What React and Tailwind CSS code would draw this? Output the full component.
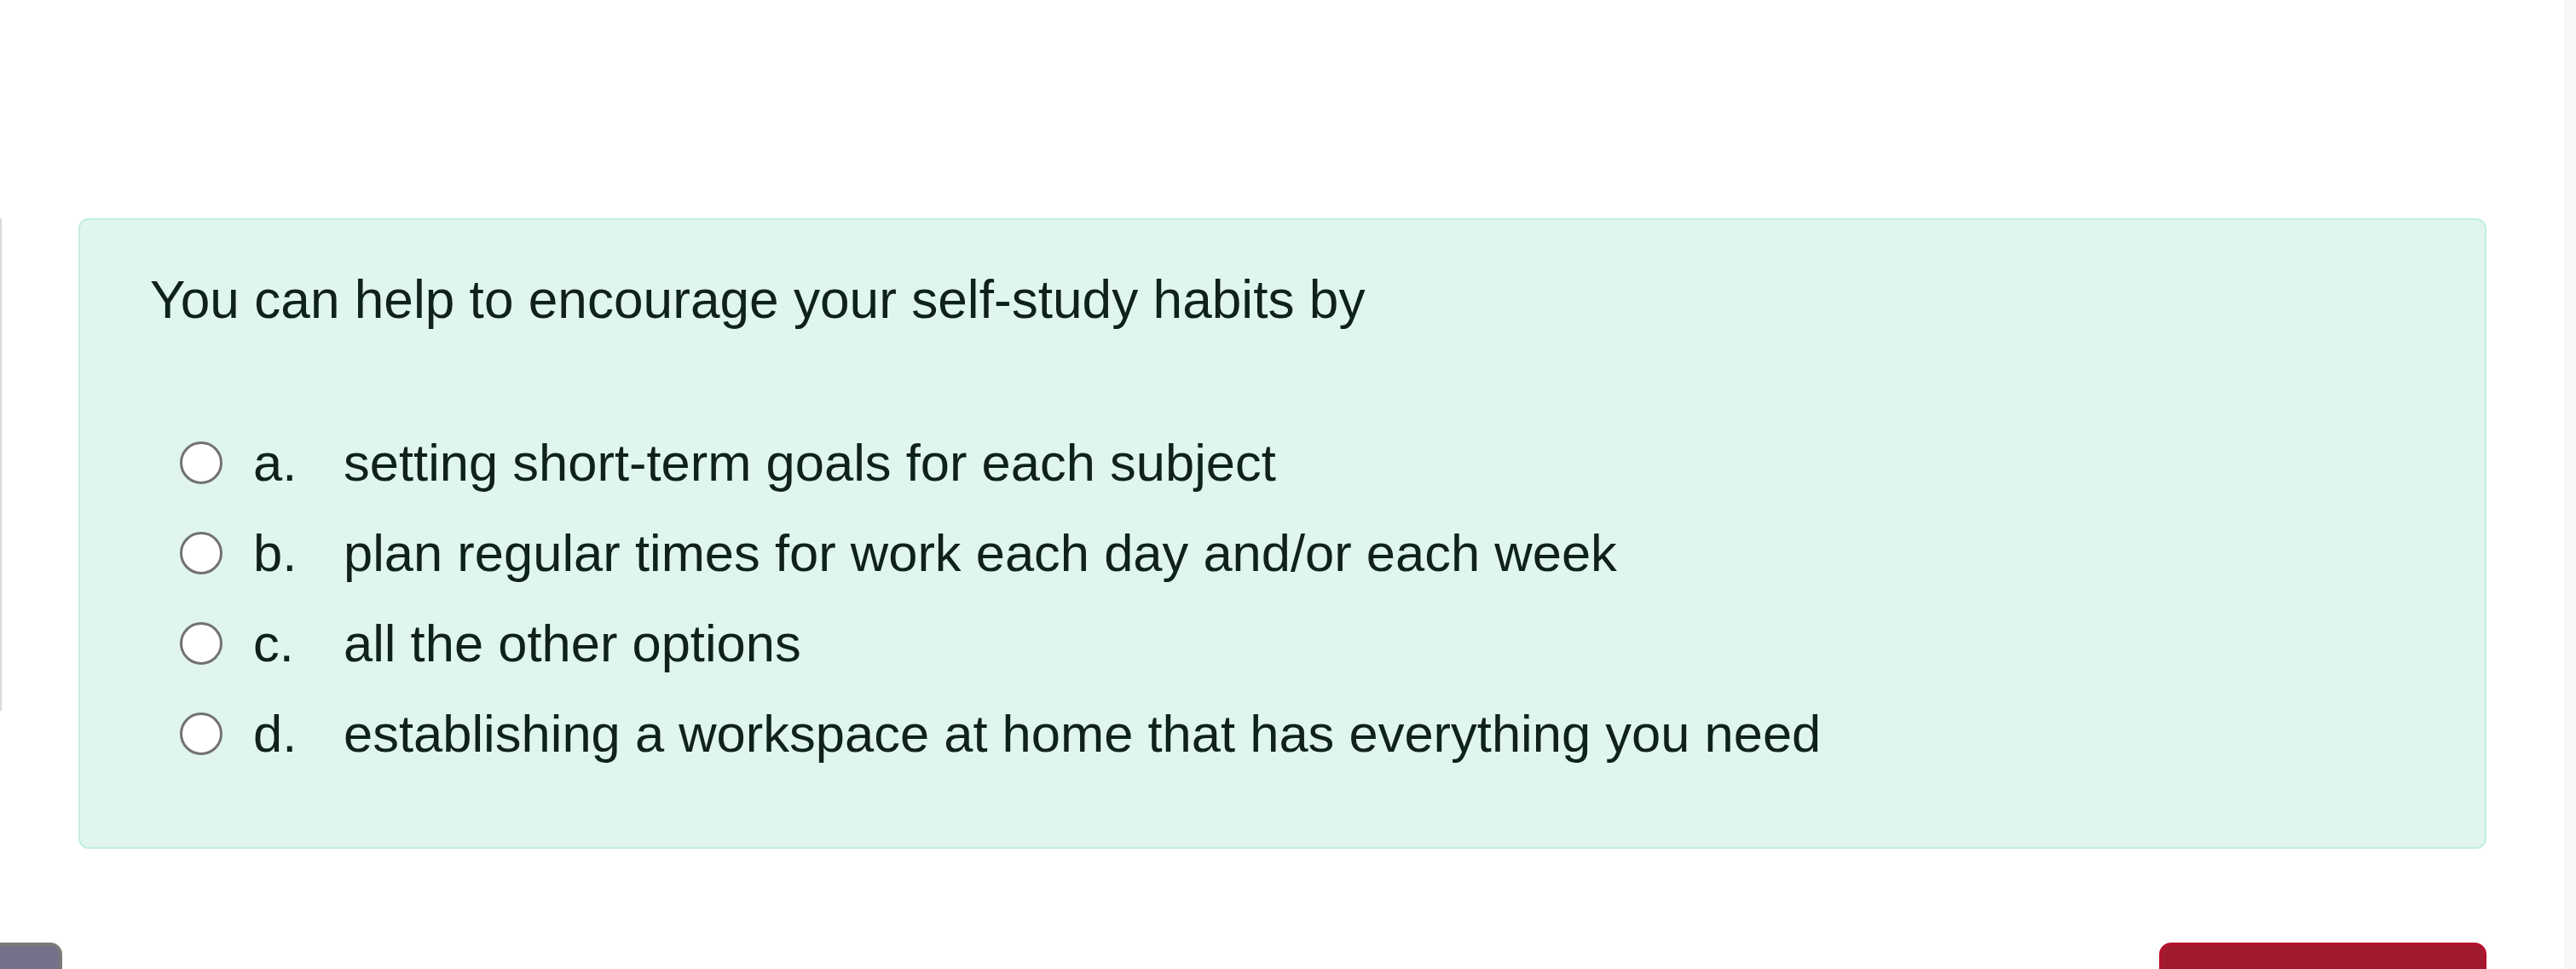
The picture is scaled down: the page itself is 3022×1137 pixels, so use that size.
export default function App() {
  const options = [
    { key: 'a.', text: 'setting short-term goals for each subject' },
    { key: 'b.', text: 'plan regular times for work each day and/or each week' },
    { key: 'c.', text: 'all the other options' },
    { key: 'd.', text: 'establishing a workspace at home that has everything you need' },
  ];

  return (
    <div
      className="flex h-[1137px] w-full overflow-hidden bg-white text-[#0e211a]"
      style={{ fontFamily: '"Liberation Sans", Arial, sans-serif' }}
    >
      <div className="flex w-[3008px] flex-col pt-[256px]">
        <div className="flex">
          {/* sidebar edge */}
          <div className="h-[578px] w-[2px] bg-[#dadada]" />

          <div className="ml-[90px] w-[2825px] rounded-[12px] border-2 border-[#c2eedf] bg-[#dff5ee] pb-[80px] pl-[82px] pt-[48px]">
            <p className="text-[62.2px] leading-[92px]">
              You can help to encourage your self-study habits by
            </p>

            <div className="mt-[92px] flex flex-col">
              {options.map((opt) => (
                <label key={opt.key} className="flex h-[106px] items-center text-[61.5px]">
                  <span className="ml-[35px] h-[50px] w-[50px] shrink-0 rounded-full border-[3px] border-[#717171] bg-white" />
                  <span className="ml-[36px] w-[106px] shrink-0">{opt.key}</span>
                  <span>{opt.text}</span>
                </label>
              ))}
            </div>
          </div>
        </div>

        <div className="mt-[110px] flex items-start justify-between">
          <div className="-ml-[60px] h-[60px] w-[133px] rounded-[14px] border-4 border-[#7a7a7a] bg-[#74708a]" />
          <div className="mr-[91px] h-[60px] w-[384px] rounded-[14px] border-[3px] border-[#b5102c] bg-[#a11b2f]" />
        </div>
      </div>

      {/* scrollbar track */}
      <div className="h-full w-[14px] bg-[#f7f7f7]" />
    </div>
  );
}
